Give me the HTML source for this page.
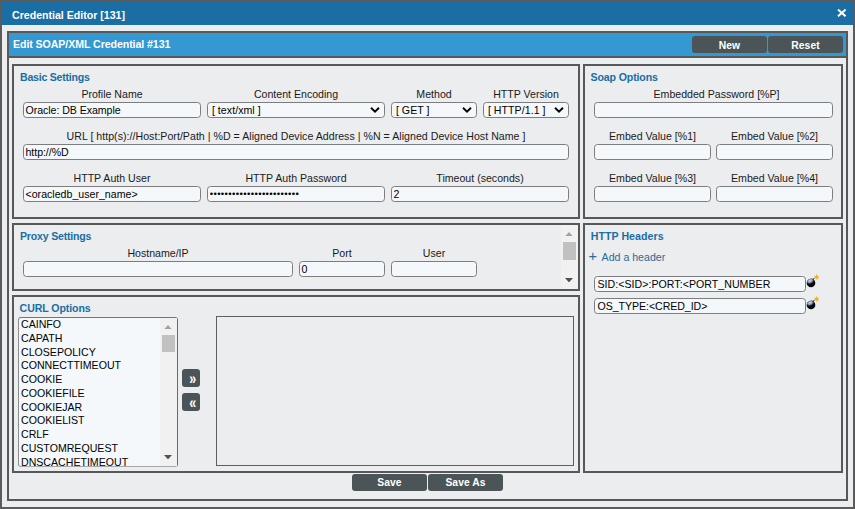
<!DOCTYPE html>
<html><head><meta charset="utf-8"><title>Credential Editor [131]</title>
<style>
html,body{margin:0;padding:0;}
body{width:855px;height:509px;overflow:hidden;background:#ecedee;font-family:"Liberation Sans",Arial,sans-serif;font-size:10.6px;color:#222;position:relative;}
.abs{position:absolute;box-sizing:border-box;}
#outer{left:0;top:0;width:855px;height:509px;border:2px solid #5b5b5b;}
#title{left:2px;top:2px;width:851px;height:23px;background:#1a6ea3;color:#fff;font-weight:bold;line-height:27px;padding-left:10px;font-size:10.6px;overflow:hidden;}
#inner{left:7px;top:31px;width:841px;height:470px;border:2px solid #585858;}
#hdr{left:9px;top:33px;width:837px;height:25px;border-bottom:2px solid #585858;background:#3498d3;color:#fff;font-weight:bold;line-height:23px;padding-left:4px;letter-spacing:-0.07px;}
.fs{border:2px solid #585858;}
.leg{color:#1a6ea3;font-weight:bold;font-size:10.6px;letter-spacing:-0.2px;white-space:nowrap;}
.lbl{text-align:center;white-space:nowrap;line-height:12px;color:#1a1a1a;}
.inp{border:1px solid #7d7d7d;border-radius:3.5px;background:#f5f8fa;height:16px;line-height:14px;padding-left:1.5px;white-space:nowrap;overflow:hidden;color:#000;letter-spacing:-0.05px;}
.sel{padding-left:0.9px;letter-spacing:0.05px;}
.chev{position:absolute;right:4px;top:4px;width:10px;height:6px;}
.btn{background:#4b5557;color:#fff;font-weight:bold;text-align:center;border-radius:3px;height:17px;line-height:17px;font-size:10.3px;letter-spacing:0.06px;}
</style></head><body>
<svg width="0" height="0" style="position:absolute"><defs>
<radialGradient id="bg1" cx="0.45" cy="0.32" r="0.6"><stop offset="0" stop-color="#c6d3ee"/><stop offset="0.5" stop-color="#8e9fc6"/><stop offset="0.8" stop-color="#39425a"/><stop offset="1" stop-color="#08090c"/></radialGradient>
<radialGradient id="sp1" cx="0.5" cy="0.5" r="0.5"><stop offset="0" stop-color="#d8c02a"/><stop offset="0.45" stop-color="#f7a81e"/><stop offset="1" stop-color="#f5a21c"/></radialGradient>
</defs></svg>
<div class="abs" id="outer"></div>
<div class="abs" id="title">Credential Editor [131]</div>
<svg class="abs" style="left:836.8px;top:9px;width:10px;height:8px;" viewBox="0 0 10 8"><path d="M1 0.6 L8.6 7.3 M8.6 0.6 L1 7.3" stroke="#fff" stroke-width="2" fill="none"/></svg>
<div class="abs" id="inner"></div>
<div class="abs" id="hdr">Edit SOAP/XML Credential #131</div>
<div class="abs btn" style="left:692px;top:36px;width:75px;line-height:19.4px;">New</div>
<div class="abs btn" style="left:768px;top:36px;width:75px;line-height:19.4px;">Reset</div>

<!-- Basic Settings -->
<div class="abs fs" style="left:12px;top:64px;width:568px;height:155px;"></div>
<div class="abs leg" style="left:20px;top:71px;letter-spacing:-0.24px;">Basic Settings</div>
<div class="abs lbl" style="left:23px;top:88px;width:178px;">Profile Name</div>
<div class="abs inp" style="left:23px;top:102px;width:178px;">Oracle: DB Example</div>
<div class="abs lbl" style="left:207px;top:88px;width:178px;">Content Encoding</div>
<div class="abs inp sel" style="left:207px;top:102px;width:178px;">&nbsp;[ text/xml ]<svg class="chev" viewBox="0 0 10 6"><path d="M1 0.8 L5 4.6 L9 0.8" fill="none" stroke="#000" stroke-width="1.9"/></svg></div>
<div class="abs lbl" style="left:391px;top:88px;width:86px;">Method</div>
<div class="abs inp sel" style="left:391px;top:102px;width:86px;">&nbsp;[ GET ]<svg class="chev" viewBox="0 0 10 6"><path d="M1 0.8 L5 4.6 L9 0.8" fill="none" stroke="#000" stroke-width="1.9"/></svg></div>
<div class="abs lbl" style="left:483px;top:88px;width:86px;">HTTP Version</div>
<div class="abs inp sel" style="left:483px;top:102px;width:86px;">&nbsp;[ HTTP/1.1 ]<svg class="chev" viewBox="0 0 10 6"><path d="M1 0.8 L5 4.6 L9 0.8" fill="none" stroke="#000" stroke-width="1.9"/></svg></div>
<div class="abs lbl" style="left:23px;top:130px;width:546px;letter-spacing:0.03px;">URL [ http(s)://Host:Port/Path | %D = Aligned Device Address | %N = Aligned Device Host Name ]</div>
<div class="abs inp" style="left:23px;top:144px;width:546px;">http://%D</div>
<div class="abs lbl" style="left:23px;top:172px;width:178px;">HTTP Auth User</div>
<div class="abs inp" style="left:23px;top:186px;width:178px;letter-spacing:0.01px;">&lt;oracledb_user_name&gt;</div>
<div class="abs lbl" style="left:207px;top:172px;width:178px;">HTTP Auth Password</div>
<div class="abs inp" style="left:207px;top:186px;width:178px;letter-spacing:0.37px;font-size:9.6px;padding-left:1.7px;">&bull;&bull;&bull;&bull;&bull;&bull;&bull;&bull;&bull;&bull;&bull;&bull;&bull;&bull;&bull;&bull;&bull;&bull;&bull;&bull;&bull;&bull;&bull;&bull;</div>
<div class="abs lbl" style="left:391px;top:172px;width:178px;">Timeout (seconds)</div>
<div class="abs inp" style="left:391px;top:186px;width:178px;">2</div>

<!-- Soap Options -->
<div class="abs fs" style="left:583px;top:64px;width:260px;height:155px;"></div>
<div class="abs leg" style="left:590.5px;top:71px;letter-spacing:-0.13px;">Soap Options</div>
<div class="abs lbl" style="left:597px;top:88px;width:239px;">Embedded Password [%P]</div>
<div class="abs inp" style="left:594px;top:102px;width:239px;"></div>
<div class="abs lbl" style="left:594px;top:130px;width:117px;">Embed Value [%1]</div>
<div class="abs inp" style="left:594px;top:144px;width:117px;"></div>
<div class="abs lbl" style="left:716px;top:130px;width:117px;">Embed Value [%2]</div>
<div class="abs inp" style="left:716px;top:144px;width:117px;"></div>
<div class="abs lbl" style="left:594px;top:172px;width:117px;">Embed Value [%3]</div>
<div class="abs inp" style="left:594px;top:186px;width:117px;"></div>
<div class="abs lbl" style="left:716px;top:172px;width:117px;">Embed Value [%4]</div>
<div class="abs inp" style="left:716px;top:186px;width:117px;"></div>

<!-- Proxy Settings -->
<div class="abs fs" style="left:12px;top:223px;width:568px;height:68px;"></div>
<div class="abs leg" style="left:20px;top:230px;letter-spacing:-0.21px;">Proxy Settings</div>
<div class="abs lbl" style="left:23px;top:247px;width:270px;">Hostname/IP</div>
<div class="abs inp" style="left:23px;top:261px;width:270px;"></div>
<div class="abs lbl" style="left:299px;top:247px;width:86px;">Port</div>
<div class="abs inp" style="left:299px;top:261px;width:86px;">0</div>
<div class="abs lbl" style="left:391px;top:247px;width:86px;">User</div>
<div class="abs inp" style="left:391px;top:261px;width:86px;"></div>

<div class="abs" style="left:561px;top:225px;width:17px;height:64px;background:#f1f1f1;"></div><div class="abs" style="left:563px;top:242px;width:13px;height:18px;background:#c1c1c1;"></div><svg class="abs" style="left:564.8px;top:231.7px;width:8px;height:4.4px;" viewBox="0 0 8 4.4"><path d="M0 4.4 L4 0 L8 4.4 Z" fill="#a3a3a3"/></svg><svg class="abs" style="left:564.8px;top:277.8px;width:8px;height:4.4px;" viewBox="0 0 8 4.4"><path d="M0 0 L4 4.4 L8 0 Z" fill="#505050"/></svg>
<!-- HTTP Headers -->
<div class="abs fs" style="left:583px;top:223px;width:260px;height:250px;"></div>
<div class="abs leg" style="left:590.7px;top:230px;letter-spacing:0.06px;">HTTP Headers</div>
<div class="abs" style="left:588.6px;top:248px;color:#2a6a9a;white-space:nowrap;line-height:16px;font-size:14.5px;">+</div><div class="abs" style="left:601.6px;top:250px;color:#2a6a9a;white-space:nowrap;line-height:14px;">Add a header</div>
<div class="abs inp" style="left:594px;top:276px;width:212px;padding-left:2.5px;letter-spacing:0.04px;">SID:&lt;SID&gt;:PORT:&lt;PORT_NUMBER</div>
<div class="abs inp" style="left:594px;top:298px;width:212px;padding-left:2.5px;">OS_TYPE:&lt;CRED_ID&gt;</div>

<svg class="abs" style="left:804.7px;top:271.0px;width:18px;height:18px;overflow:visible;" viewBox="0 0 18 18"><circle cx="6" cy="12" r="4.3" fill="#08090c"/><ellipse cx="5.7" cy="10.5" rx="3.7" ry="2.6" fill="url(#bg1)" transform="rotate(-22 5.7 10.5)"/><path d="M7.8 8.3 L9.6 7.2" stroke="#222" stroke-width="0.9" fill="none"/><path d="M11.6 2.8 L12.3 5.0 L14.2 4.5 L13.0 6.0 L14.6 7.6 L12.5 7.3 L11.9 9.3 L11.1 7.3 L9.1 7.8 L10.4 6.2 L8.9 4.7 L10.9 5.0 Z" fill="url(#sp1)"/></svg>
<svg class="abs" style="left:804.7px;top:292.9px;width:18px;height:18px;overflow:visible;" viewBox="0 0 18 18"><circle cx="6" cy="12" r="4.3" fill="#08090c"/><ellipse cx="5.7" cy="10.5" rx="3.7" ry="2.6" fill="url(#bg1)" transform="rotate(-22 5.7 10.5)"/><path d="M7.8 8.3 L9.6 7.2" stroke="#222" stroke-width="0.9" fill="none"/><path d="M11.6 2.8 L12.3 5.0 L14.2 4.5 L13.0 6.0 L14.6 7.6 L12.5 7.3 L11.9 9.3 L11.1 7.3 L9.1 7.8 L10.4 6.2 L8.9 4.7 L10.9 5.0 Z" fill="url(#sp1)"/></svg>
<!-- CURL Options -->
<div class="abs fs" style="left:12px;top:295px;width:568px;height:178px;"></div>
<div class="abs leg" style="left:19.6px;top:302px;letter-spacing:-0.1px;">CURL Options</div>
<div class="abs" style="left:18px;top:317px;width:160px;height:150px;border:1px solid #8a8a8a;border-color:#747474 #6a6a6a #a8a8a8 #8c8c8c;border-radius:3px;background:#f5f8fa;overflow:hidden;line-height:13.75px;padding-left:2px;color:#000;">CAINFO<br>CAPATH<br>CLOSEPOLICY<br>CONNECTTIMEOUT<br>COOKIE<br>COOKIEFILE<br>COOKIEJAR<br>COOKIELIST<br>CRLF<br>CUSTOMREQUEST<br>DNSCACHETIMEOUT</div>
<div class="abs" style="left:160px;top:318px;width:17px;height:148px;background:#f1f1f1;"></div><div class="abs" style="left:162px;top:335px;width:13px;height:17px;background:#c1c1c1;"></div><svg class="abs" style="left:163.9px;top:324.7px;width:8px;height:4.4px;" viewBox="0 0 8 4.4"><path d="M0 4.4 L4 0 L8 4.4 Z" fill="#a3a3a3"/></svg><svg class="abs" style="left:163.9px;top:454.7px;width:8px;height:4.4px;" viewBox="0 0 8 4.4"><path d="M0 0 L4 4.4 L8 0 Z" fill="#505050"/></svg>
<div class="abs" style="left:216px;top:316px;width:358px;height:150px;border:1px solid #5e5e5e;"></div>
<div class="abs btn" style="left:182px;top:369px;width:18px;height:18px;font-size:12.5px;line-height:22.5px;padding-left:3.5px;letter-spacing:0;overflow:hidden;"><span style="display:inline-block;transform:scaleY(1.25);transform-origin:50% 62%;">&raquo;</span></div>
<div class="abs btn" style="left:182px;top:393px;width:18px;height:18px;font-size:12.5px;line-height:22.5px;padding-left:3.5px;letter-spacing:0;overflow:hidden;"><span style="display:inline-block;transform:scaleY(1.25);transform-origin:50% 62%;">&laquo;</span></div>

<div class="abs btn" style="left:352px;top:474px;width:75px;">Save</div>
<div class="abs btn" style="left:428px;top:474px;width:75px;">Save As</div>
</body></html>
